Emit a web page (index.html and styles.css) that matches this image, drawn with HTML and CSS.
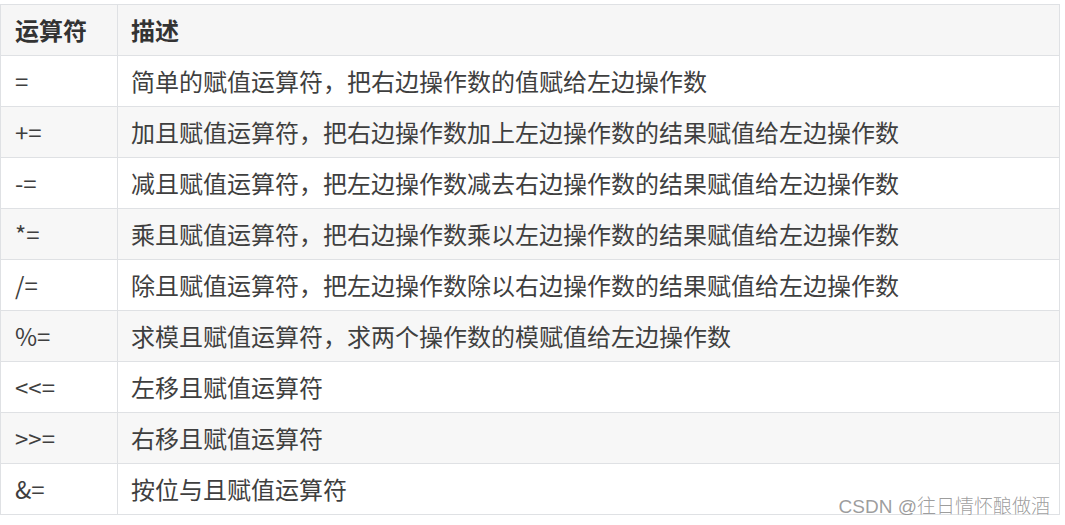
FILE: index.html
```html
<!DOCTYPE html>
<html lang="zh">
<head>
<meta charset="utf-8">
<link rel="stylesheet" href="styles.css">
</head>
<body>
<div class="wrap">
<table class="ops">
  <thead>
    <tr><th class="c1">运算符</th><th>描述</th></tr>
  </thead>
  <tbody>
    <tr><td class="c1">=</td><td>简单的赋值运算符，把右边操作数的值赋给左边操作数</td></tr>
    <tr><td class="c1">+=</td><td>加且赋值运算符，把右边操作数加上左边操作数的结果赋值给左边操作数</td></tr>
    <tr><td class="c1">-=</td><td>减且赋值运算符，把左边操作数减去右边操作数的结果赋值给左边操作数</td></tr>
    <tr><td class="c1">*=</td><td>乘且赋值运算符，把右边操作数乘以左边操作数的结果赋值给左边操作数</td></tr>
    <tr><td class="c1">/=</td><td>除且赋值运算符，把左边操作数除以右边操作数的结果赋值给左边操作数</td></tr>
    <tr><td class="c1">%=</td><td>求模且赋值运算符，求两个操作数的模赋值给左边操作数</td></tr>
    <tr><td class="c1">&lt;&lt;=</td><td>左移且赋值运算符</td></tr>
    <tr><td class="c1">&gt;&gt;=</td><td>右移且赋值运算符</td></tr>
    <tr><td class="c1">&amp;=</td><td>按位与且赋值运算符</td></tr>
  </tbody>
</table>
<div class="watermark">CSDN @往日情怀酿做酒</div>
</div>
</body>
</html>
```
FILE: styles.css
```css
html, body {
  margin: 0;
  padding: 0;
  background: #ffffff;
}
body {
  padding-top: 4px;
  font-family: "Noto Sans CJK SC", "Noto Sans", sans-serif;
}
.wrap {
  position: relative;
  width: 1060px;
}
.ops {
  border-collapse: collapse;
  width: 1060px;
  table-layout: fixed;
  font-size: 24px;
  color: #3f3f3f;
}
.ops th, .ops td {
  border: 1px solid #dfe1e4;
  height: 51px;
  padding: 0 13px;
  text-align: left;
  vertical-align: middle;
  box-sizing: border-box;
  white-space: nowrap;
  line-height: 30px;
}
.ops .c1 {
  width: 117px;
  padding-left: 14px;
}
.ops th {
  background: #f6f6f6;
  font-weight: 700;
  color: #333333;
}
.ops tbody tr:nth-child(even) td {
  background: #f7f7f7;
}
.watermark {
  position: absolute;
  right: 10px;
  bottom: -4px;
  font-family: "Liberation Sans", "Noto Sans CJK SC", sans-serif;
  font-size: 19px;
  line-height: 24px;
  color: rgba(140, 140, 140, 0.85);
  font-weight: 300;
}
```
